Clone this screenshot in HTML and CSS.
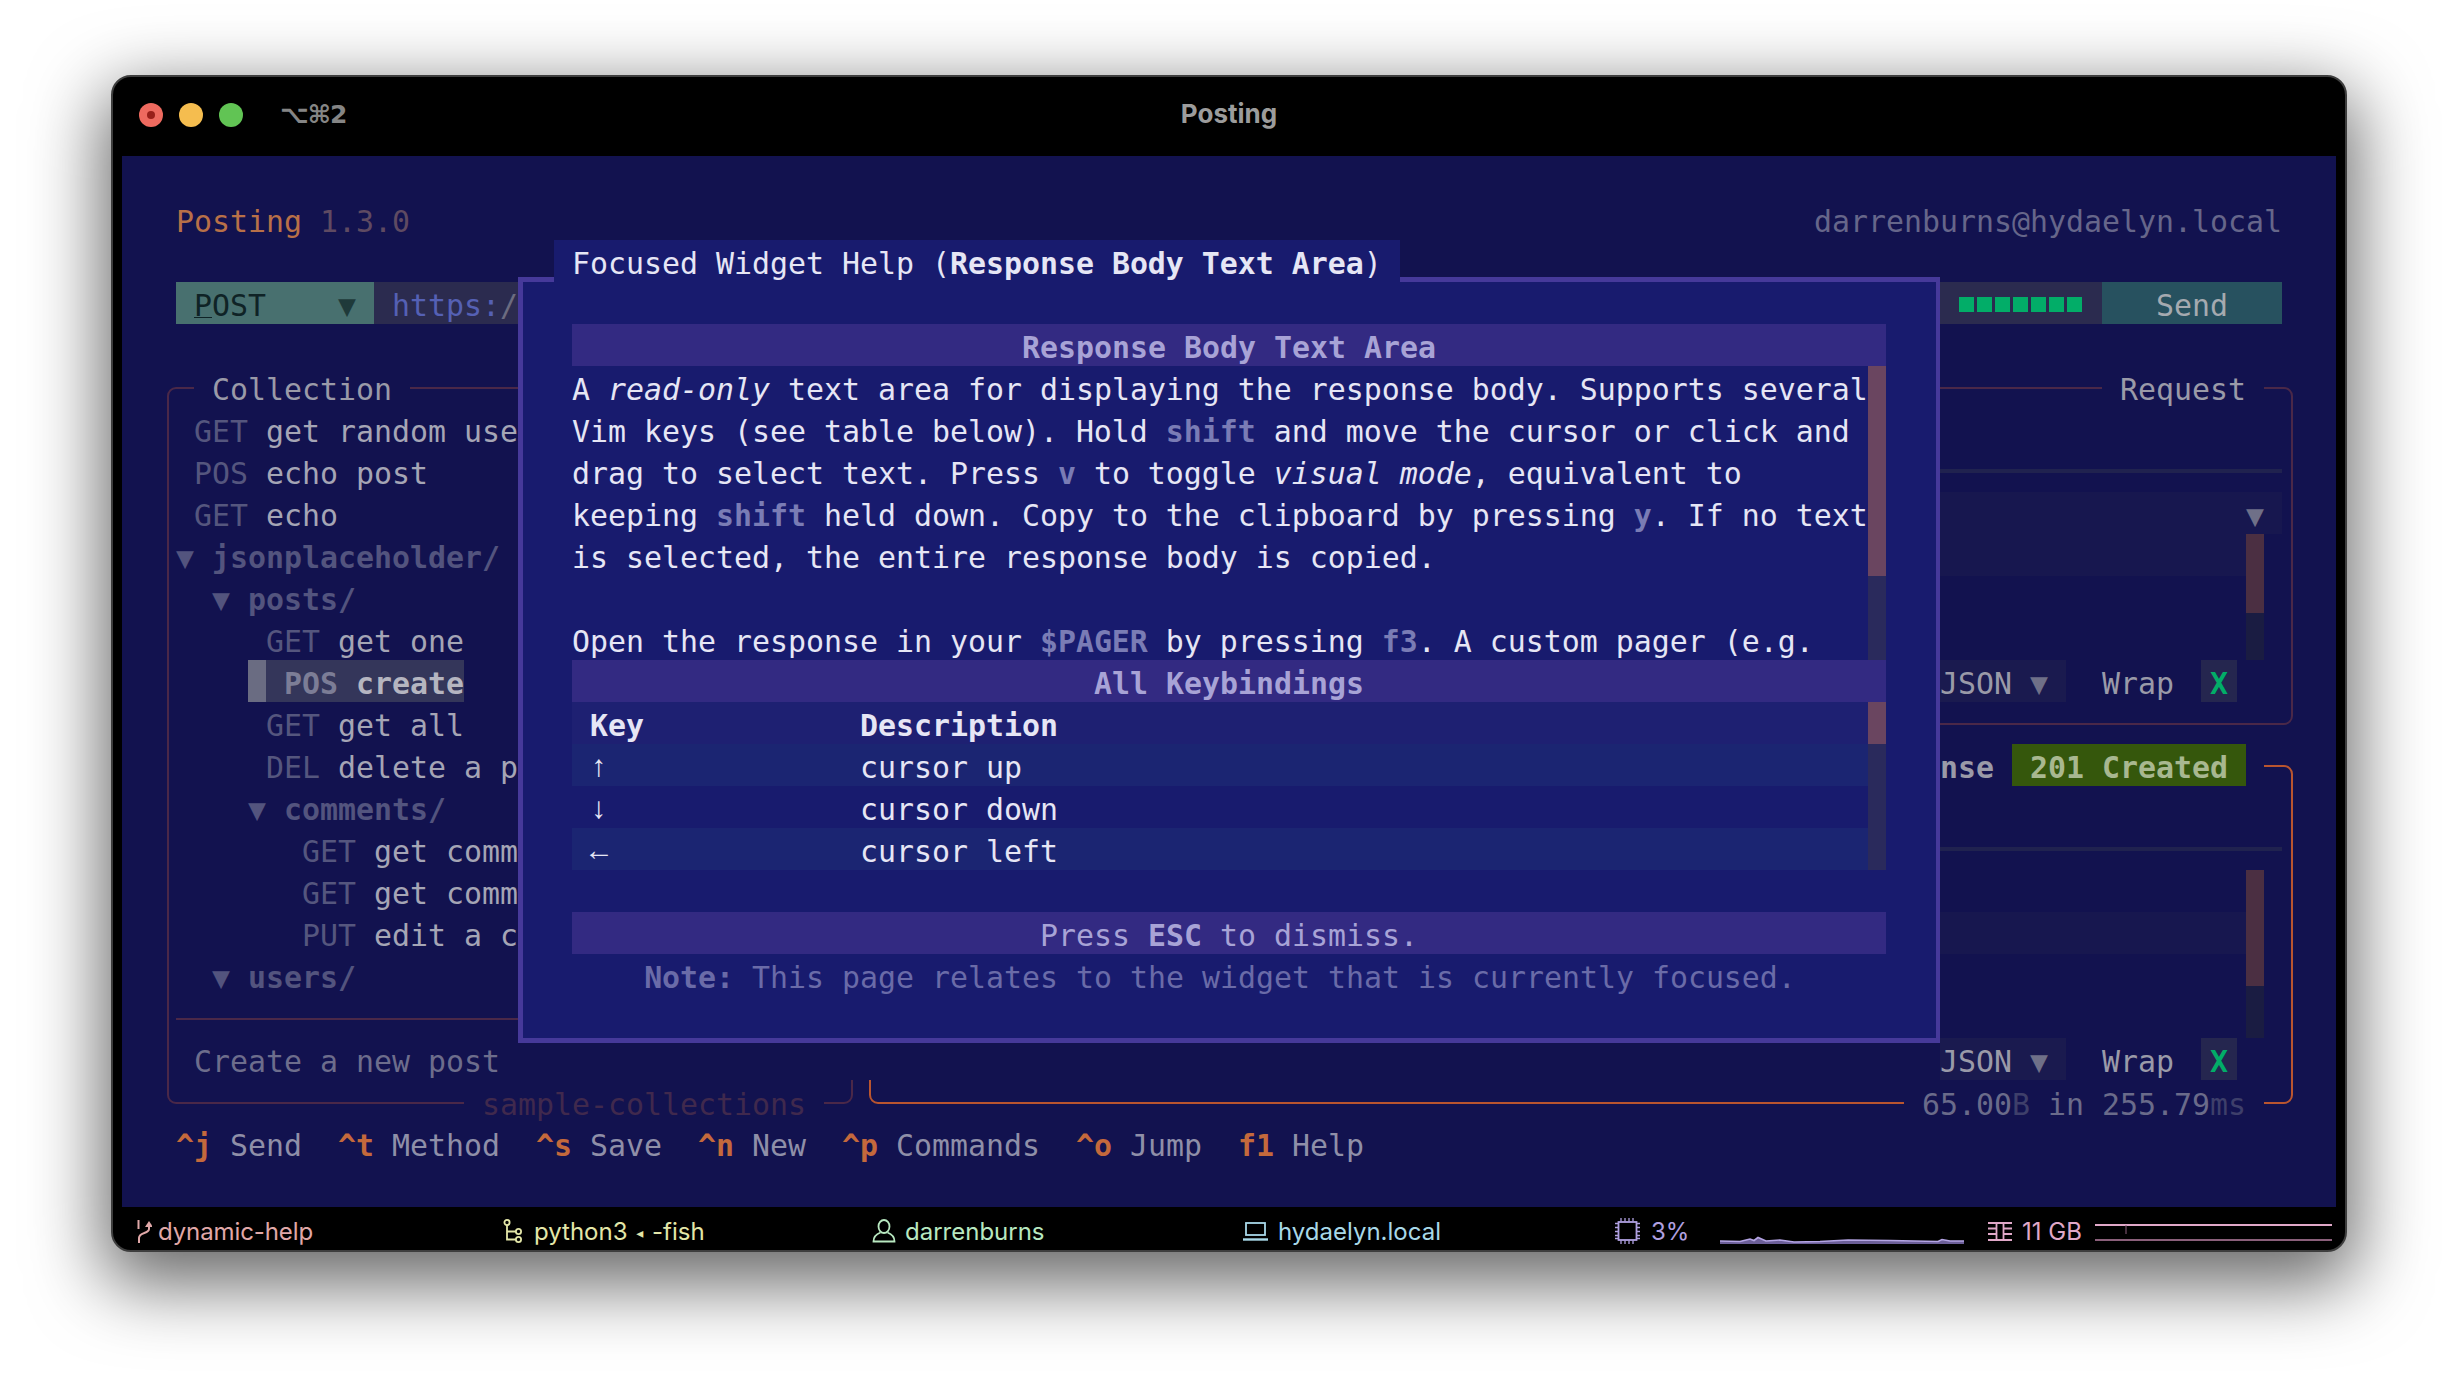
FILE: index.html
```html
<!DOCTYPE html>
<html lang="en">
<head>
<meta charset="utf-8">
<title>Posting</title>
<link rel="stylesheet" href="styles.css">
</head>
<body>
<div class="window">
  <header class="titlebar">
    <div class="title-left">
      <span class="light red"></span><span class="light yellow"></span><span class="light green"></span>
      <span class="tabkey">⌥⌘2</span>
    </div>
    <div class="title-center">Posting</div>
    <div></div>
  </header>

  <main class="terminal">
    <div class="row"></div>
    <div class="row app-head">
      <span><span class="app-name">Posting</span> <span class="app-ver">1.3.0</span></span>
      <span class="app-host">darrenburns@hydaelyn.local</span>
    </div>
    <div class="row"></div>
    <div class="row urlbar">
      <div class="method"><span><u>P</u>OST</span><span class="method-arrow">▼</span></div>
      <div class="url"><span class="url-text">https:<span class="url-dim">/</span></span>
        <span class="progress"><i></i><i></i><i></i><i></i><i></i><i></i><i></i></span>
      </div>
      <div class="send">Send</div>
    </div>
    <div class="row"></div>

    <div class="main">
      <section class="panel panel-left">
        <div class="panel-title title-collection">Collection</div>
        <div class="row ind1"><span class="verb">GET</span> <span class="name">get random use</span></div>
        <div class="row ind1"><span class="verb">POS</span> <span class="name">echo post</span></div>
        <div class="row ind1"><span class="verb">GET</span> <span class="name">echo</span></div>
        <div class="row dir">▼ jsonplaceholder/</div>
        <div class="row dir ind2">▼ posts/</div>
        <div class="row ind5"><span class="verb">GET</span> <span class="name">get one</span></div>
        <div class="row ind4"><div class="selected"><span class="sel-bar"></span><span class="sel-text"> <span class="sel-verb">POS</span> <b>create</b></span></div></div>
        <div class="row ind5"><span class="verb">GET</span> <span class="name">get all</span></div>
        <div class="row ind5"><span class="verb">DEL</span> <span class="name">delete a p</span></div>
        <div class="row dir ind4">▼ comments/</div>
        <div class="row ind7"><span class="verb">GET</span> <span class="name">get comm</span></div>
        <div class="row ind7"><span class="verb">GET</span> <span class="name">get comm</span></div>
        <div class="row ind7"><span class="verb">PUT</span> <span class="name">edit a c</span></div>
        <div class="row dir ind2">▼ users/</div>
        <div class="row divider"></div>
        <div class="row ind1 desc">Create a new post</div>
        <div class="panel-title title-sample">sample-collections</div>
      </section>

      <div class="right-col">
        <section class="panel panel-request">
          <div class="panel-title title-request">Request</div>
          <div class="row"></div>
          <div class="row tabline"></div>
          <div class="row hl-full"><span class="hl-arrow">▼</span></div>
          <div class="body-scroll body-request">
            <div class="body-text"><div class="row hl"></div></div>
            <div class="sbar"><div class="sbar-thumb thumb-request"></div></div>
          </div>
          <div class="row tools"><div class="select">JSON <span class="select-arrow">▼</span> </div><span class="wrap-label">Wrap</span><span class="check">X</span></div>
        </section>

        <section class="panel panel-response">
          <div class="panel-title title-response"><b class="resp-label">nse</b><b class="status-badge">201 Created</b></div>
          <div class="row"></div>
          <div class="row tabline"></div>
          <div class="body-scroll body-response">
            <div class="body-text"><div class="row"></div><div class="row hl"></div></div>
            <div class="sbar"><div class="sbar-thumb thumb-response"></div></div>
          </div>
          <div class="row tools"><div class="select">JSON <span class="select-arrow">▼</span> </div><span class="wrap-label">Wrap</span><span class="check">X</span></div>
          <div class="panel-title title-size">65.00<span class="unit">B</span> in 255.79<span class="unit">ms</span></div>
        </section>
      </div>
    </div>

    <div class="row keys"><b>^j</b> <span>Send</span>  <b>^t</b> <span>Method</span>  <b>^s</b> <span>Save</span>  <b>^n</b> <span>New</span>  <b>^p</b> <span>Commands</span>  <b>^o</b> <span>Jump</span>  <b>f1</b> <span>Help</span></div>

    <div class="border-gap"></div>

    <aside class="modal">
      <div class="modal-tab">Focused Widget Help (<b>Response Body Text Area</b>)</div>
      <div class="row band"><b>Response Body Text Area</b></div>
      <div class="help-area">
        <div class="help-text">
          <div class="row">A <i>read-only</i> text area for displaying the response body. Supports several</div>
          <div class="row">Vim keys (see table below). Hold <b class="k">shift</b> and move the cursor or click and</div>
          <div class="row">drag to select text. Press <b class="k">v</b> to toggle <i>visual mode</i>, equivalent to</div>
          <div class="row">keeping <b class="k">shift</b> held down. Copy to the clipboard by pressing <b class="k">y</b>. If no text</div>
          <div class="row">is selected, the entire response body is copied.</div>
          <div class="row"></div>
          <div class="row">Open the response in your <b class="k">$PAGER</b> by pressing <b class="k">f3</b>. A custom pager (e.g.</div>
        </div>
        <div class="msbar"><div class="msbar-thumb thumb-help"></div></div>
      </div>
      <div class="row band"><b>All Keybindings</b></div>
      <div class="help-area">
        <div class="kb-table">
          <div class="row kb kb-head"><b>Key</b><b>Description</b></div>
          <div class="row kb kb-alt"><span class="arrow">↑</span><span>cursor up</span></div>
          <div class="row kb"><span class="arrow">↓</span><span>cursor down</span></div>
          <div class="row kb kb-alt"><span class="arrow">←</span><span>cursor left</span></div>
        </div>
        <div class="msbar"><div class="msbar-thumb thumb-table"></div></div>
      </div>
      <div class="row"></div>
      <div class="row band press">Press <b>ESC</b> to dismiss.</div>
      <div class="row note"><b>Note:</b> This page relates to the widget that is currently focused.</div>
    </aside>
  </main>

  <footer class="statusbar">
    <div class="st st-branch">
      <svg class="ic" width="16" height="23" viewBox="0 0 16 23" fill="none" stroke="currentColor" stroke-width="2"><path d="M2.5 0V9M13 5V9C13 14 3 12 3 18V23"/><path d="M13 1L9 7H17Z" fill="currentColor" stroke="none"/></svg>
      <span>dynamic-help</span>
    </div>
    <div class="st st-proc">
      <svg class="ic" width="20" height="24" viewBox="0 0 20 24" fill="none" stroke="currentColor" stroke-width="1.8"><circle cx="4" cy="3.5" r="2.6"/><circle cx="15.5" cy="12.5" r="2.6"/><circle cx="15.5" cy="20.5" r="2.6"/><path d="M4 6V20.5H13M4 12.5H13"/></svg>
      <span>python3 <span class="tiny">◂</span> -fish</span>
    </div>
    <div class="st st-user">
      <svg class="ic" width="24" height="24" viewBox="0 0 24 24" fill="none" stroke="currentColor" stroke-width="1.8"><ellipse cx="12" cy="7.5" rx="5.5" ry="6.5"/><path d="M8.5 13.5C4.5 15 1.5 17 1.5 22.5H22.5C22.5 17 19.5 15 15.5 13.5"/></svg>
      <span>darrenburns</span>
    </div>
    <div class="st st-host">
      <svg class="ic" width="25" height="19" viewBox="0 0 25 19" fill="none" stroke="currentColor" stroke-width="1.8"><rect x="3" y="1" width="19" height="12"/><path d="M0 17.5H25" stroke-width="2.4"/></svg>
      <span>hydaelyn.local</span>
    </div>
    <div class="st st-cpu">
      <svg class="ic" width="25" height="26" viewBox="0 0 25 26" fill="none" stroke="currentColor" stroke-width="1.8"><rect x="3.5" y="4" width="18" height="18"/><path d="M0 5.5H3M0 9.5H3M0 13.5H3M0 17.5H3M0 20.5H3M22 5.5H25M22 9.5H25M22 13.5H25M22 17.5H25M22 20.5H25M6 0V3.5M10 0V3.5M14 0V3.5M18 0V3.5M6 22.5V26M10 22.5V26M14 22.5V26M18 22.5V26" stroke-width="1.3"/></svg>
      <span class="st-val">3%</span>
      <svg class="graph-cpu" width="244" height="12" viewBox="0 0 244 12" fill="none"><path d="M0 11V8L20 8.5L30 6L34 7.5L38 4.5L46 8L60 7L74 9L100 8.5L128 7L170 7.5L218 8.5L222 6.5L230 8L244 8V11Z" fill="#6c5f98"/><path d="M0 8L20 8.5L30 6L34 7.5L38 4.5L46 8L60 7L74 9L100 8.5L128 7L170 7.5L218 8.5L222 6.5L230 8L244 8" stroke="#b4a4e4" stroke-width="1.6"/></svg>
    </div>
    <div class="st st-mem">
      <svg class="ic" width="24" height="19" viewBox="0 0 24 19" fill="none" stroke="currentColor" stroke-width="1.8"><path d="M0 1H24M0 18H24M0 6.5H8.5M15.5 6.5H24M0 12H8.5M15.5 12H24M8.5 1V18M15.5 1V18"/></svg>
      <span class="st-val">11 GB</span>
      <svg class="graph-mem" width="237" height="20" viewBox="0 0 237 20" fill="none"><path d="M0 3H237" stroke="#e0a8c8" stroke-width="2"/><path d="M31 3V12" stroke="#8a5f7a" stroke-width="1"/><path d="M0 18H237" stroke="#8a5f7a" stroke-width="2"/></svg>
    </div>
  </footer>
</div>
</body>
</html>
```

FILE: styles.css
```css
:root {
  --c: 18px;
  --r: 42px;
  --lh: 48px;
  --bg: #12124f;
  --border: #4a2848;
}
* { box-sizing: border-box; }
html, body { margin: 0; background: #fff; }
body { padding: 75px 111px 0; height: 1400px; overflow: hidden; }

.window {
  width: 2236px;
  height: 1177px;
  background: #000;
  border: 2px solid #3e3e3e;
  border-radius: 20px;
  padding: 0 9px;
  box-shadow: 0 24px 72px 8px rgba(0, 0, 0, 0.6);
}

/* title bar */
.titlebar {
  height: 79px;
  display: grid;
  grid-template-columns: 1fr auto 1fr;
  align-items: center;
  padding-bottom: 6px;
  font-family: Inter, "Liberation Sans", sans-serif;
}
.title-left { display: flex; align-items: center; gap: 16px; padding-left: 17px; position: relative; top: 1px; }
.light { width: 24px; height: 24px; border-radius: 50%; position: relative; }
.red { background: #ee6a5f; }
.yellow { background: #f5bd4f; }
.green { background: #61c454; }
.red::after {
  content: "";
  position: absolute;
  left: 8px; top: 8px;
  width: 8px; height: 8px;
  border-radius: 50%;
  background: #99201a;
}
.tabkey {
  margin-left: 21px;
  font: bold 25px "DejaVu Sans", sans-serif;
  color: #858585;
  letter-spacing: -1px;
}
.title-center { color: #9c9c9c; font-weight: 700; font-size: 26px; }

/* terminal grid */
.terminal {
  position: relative;
  width: 2214px;
  height: 1051px;
  background: var(--bg);
  color: #a5a5b5;
  font-family: "DejaVu Sans Mono", "Liberation Mono", monospace;
  font-size: 29.9px;
}
.row { height: var(--r); line-height: var(--lh); white-space: pre; }

.app-head { display: flex; justify-content: space-between; padding: 0 54px; }
.app-name { color: #b87048; }
.app-ver { color: #5f4a62; }
.app-host { color: #66668a; }

.urlbar { display: flex; padding: 0 54px; }
.method {
  width: 198px;
  background: #48706f;
  color: #0f2326;
  display: flex;
  padding-left: 18px;
  gap: 72px;
}
.method u { text-decoration-thickness: 1px; }
.method-arrow { color: #1f3a3a; }
.url {
  flex: 1;
  background: #2b2b4f;
  display: flex;
  justify-content: space-between;
  padding: 0 18px;
  color: #5560b4;
}
.url-dim { color: #6c6c80; }
.progress { display: flex; gap: 3px; align-self: center; padding-right: 2px; margin-top: 2px; }
.progress i { width: 15px; height: 15px; background: #02ad68; }
.send { width: 180px; background: #27515f; color: #a5aab0; text-align: center; }

/* panels */
.main { display: flex; height: 756px; padding: 21px 0 18px 45px; }
.panel {
  position: relative;
  border: 2px solid var(--border);
  border-radius: 9px;
}
.panel-left { width: 686px; padding: 19px 0 0 7px; }
.right-col { width: 1424px; margin-left: 16px; display: flex; flex-direction: column; gap: 40px; }
.panel-request { height: 338px; padding: 19px 9px 0 7px; }
.panel-response { flex: 1; padding: 19px 9px 0 7px; border-color: #b9552f; }

.panel-title { position: absolute; background: var(--bg); white-space: pre; height: var(--r); line-height: var(--lh); }
.title-collection { top: -23px; left: 25px; padding: 0 18px; color: #9a9aa8; }
.title-sample { bottom: -21px; left: 295px; padding: 0 18px; color: #40294d; width: 360px; }
.title-request { top: -23px; right: 27px; padding: 0 18px; color: #9a9aa8; }
.title-response {
  top: -23px;
  right: 27px;
  display: flex;
  background: var(--bg);
  padding: 0 18px 0 0;
  color: #9a9aa8;
}
.title-size { bottom: -21px; right: 27px; width: 360px; padding-left: 18px; color: #6a6b8a; }
.unit { color: #3e3f6a; }
.resp-label { padding-right: 18px; }
.status-badge { background: #35570c; color: #a8b890; padding: 0 18px; }

/* tree */
.ind1 { padding-left: 18px; }
.ind2 { padding-left: 36px; }
.ind4 { padding-left: 72px; }
.ind5 { padding-left: 90px; }
.ind7 { padding-left: 126px; }
.verb { color: #55567e; }
.name { color: #a5a5b5; }
.dir { color: #53547e; font-weight: 700; }
.desc { color: #6d6d8c; }
.selected { display: flex; width: 216px; height: var(--r); background: #34365a; color: #84859c; }
.sel-bar { width: 18px; background: #6a6c82; }
.sel-verb { font-weight: 700; color: #7c7d96; }
.selected b { color: #b5b5c0; }
.divider { position: relative; }
.divider::after {
  content: "";
  position: absolute;
  left: 0; right: 0; top: 22px;
  height: 2px;
  background: var(--border);
}

/* request / response bodies */
.tabline { position: relative; }
.tabline::after {
  content: "";
  position: absolute;
  left: 0; right: 0; top: 19px;
  height: 4px;
  background: #20224f;
}
.hl-full, .hl { background: #17174f; }
.hl-full { text-align: right; padding-right: 18px; }
.hl-arrow { color: #6f7088; }
.body-scroll { display: flex; padding-right: 18px; }
.body-request { height: 126px; }
.body-response { height: 168px; }
.body-text { flex: 1; }
.sbar { width: 18px; background: #1a1c42; margin-left: 0; }
.sbar-thumb { background: #4b2f42; }
.thumb-request { height: 79px; }
.thumb-response { height: 116px; }
.tools { display: flex; padding-left: 1062px; }
.select { background: #1a1a4f; color: #9a9aa8; width: 126px; white-space: pre; }
.select-arrow { color: #6f7088; }
.wrap-label { margin-left: 36px; color: #9a9aa8; }
.check { margin-left: 27px; width: 36px; background: #25264f; color: #02ad68; font-weight: 700; text-align: center; }

/* footer keys */
.keys { padding-left: 54px; color: #8f8fa8; }
.keys b { color: #c4693c; }

/* the terminal does not paint the panel edges on this row */
.border-gap {
  position: absolute;
  left: 722px;
  top: 887px;
  width: 30px;
  height: 37px;
  background: var(--bg);
}

/* modal */
.modal {
  position: absolute;
  left: 396px;
  top: 121px;
  width: 1422px;
  height: 766px;
  background: #181b6e;
  border: 5px solid #46399a;
  border-right-width: 4px;
  padding: 42px 50px 0 49px;
  color: #e6e6f5;
}
.modal-tab {
  position: absolute;
  left: 31px;
  top: -42px;
  width: 846px;
  height: calc(var(--r) + 5px);
  padding-left: 18px;
  line-height: var(--lh);
  background: #181b6e;
  white-space: pre;
}
.modal b { font-weight: 700; }
.band { background: #332a82; color: #a8a3d6; text-align: center; }
.k { color: #7a7cb5; }
.help-area { display: flex; }
.help-text, .kb-table { width: 1296px; }
.msbar { width: 18px; background: #2a2a5c; }
.msbar-thumb { background: #6a4560; }
.thumb-help { height: 210px; }
.thumb-table { height: 42px; }
.kb { display: grid; grid-template-columns: 270px 1fr; padding-left: 18px; }
.kb-head { background: #1e2072; }
.kb-alt { background: #1b2572; }
.arrow { font-family: "Liberation Mono", monospace; }
.note { width: 1296px; text-align: center; color: #6a6ba8; }

/* status bar */
.statusbar {
  height: 43px;
  display: grid;
  grid-template-columns: 367px 369px 371px 372px 373px 1fr;
  padding: 5px 0 0 14px;
  align-items: center;
  font-family: Inter, "Liberation Sans", sans-serif;
  font-size: 24px;
  white-space: pre;
}
.st { display: flex; align-items: center; gap: 8px; }
.ic { flex: none; }
.tiny { font-size: 14px; vertical-align: 2px; font-family: "DejaVu Sans", sans-serif; padding: 0 2px; }
.st-branch { color: #e0a8a8; gap: 6px; letter-spacing: -0.1px; }
.st-proc { color: #e3e6a8; gap: 11px; }
.st-user { color: #b8e8c0; gap: 9px; }
.st-host { color: #a8d8e8; gap: 10px; }
.st-cpu { color: #b0a0e0; gap: 11px; }
.st-mem { color: #e0a8c8; gap: 10px; }
.graph-cpu { margin-left: 20px; margin-top: 16px; }
.graph-mem { margin-left: 3px; margin-top: 2px; }
```
